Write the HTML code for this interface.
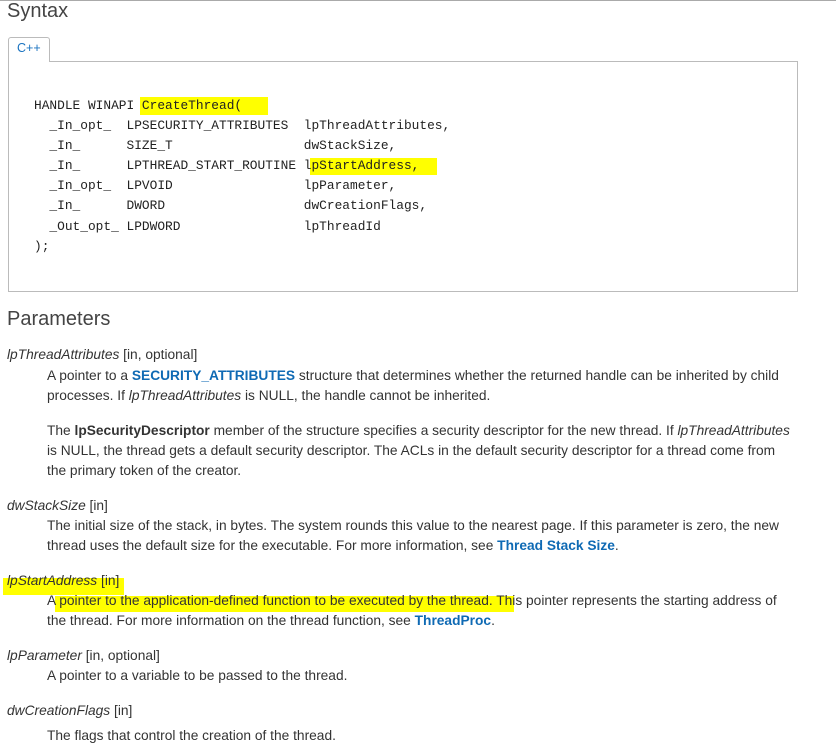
<!DOCTYPE html>
<html><head><meta charset="utf-8"><style>
body{margin:0;width:836px;height:729px;overflow:hidden;background:#fff;position:relative;font-family:"Liberation Sans",sans-serif;color:#333;}
.a{position:absolute;white-space:nowrap;}
.hl{position:absolute;background:#ffff00;}
.t{font-size:13.75px;line-height:20px;}
.m{font-family:"Liberation Mono",monospace;font-size:12.85px;line-height:20.1px;color:#222;white-space:pre;}
a{color:#0f6ab4;text-decoration:none;font-weight:bold;}
</style></head><body>
<div class="a" style="left:0;top:0;width:836px;height:1px;background:#aaa"></div>
<div class="a" style="left:7px;top:0px;font-size:20px;color:#444">Syntax</div>
<div class="a" style="left:8px;top:61px;width:790px;height:231px;border:1px solid #bbb;box-sizing:border-box"></div>
<div class="a" style="left:8px;top:37px;width:42px;height:25px;border:1px solid #bbb;border-bottom:none;border-radius:3px 3px 0 0;background:#fff;box-sizing:border-box"></div>
<div class="a" style="left:17px;top:41px;font-size:12.5px;color:#1a73c0">C++</div>
<div class="hl" style="left:140px;top:97px;width:128px;height:18px"></div>
<div class="hl" style="left:310px;top:158px;width:127px;height:17px"></div>
<div class="hl" style="left:3px;top:578px;width:121px;height:17px"></div>
<div class="hl" style="left:55px;top:596px;width:459px;height:16px"></div>
<pre class="a m" style="left:34px;top:96px;margin:0">HANDLE WINAPI CreateThread(
  _In_opt_  LPSECURITY_ATTRIBUTES  lpThreadAttributes,
  _In_      SIZE_T                 dwStackSize,
  _In_      LPTHREAD_START_ROUTINE lpStartAddress,
  _In_opt_  LPVOID                 lpParameter,
  _In_      DWORD                  dwCreationFlags,
  _Out_opt_ LPDWORD                lpThreadId
);</pre>
<div class="a" style="left:7px;top:308px;font-size:20px;color:#444">Parameters</div>
<div class="a t" style="left:7px;top:345px"><i>lpThreadAttributes</i> [in, optional]</div>
<div class="a t" style="left:47px;top:366px">A pointer to a <a>SECURITY_ATTRIBUTES</a> structure that determines whether the returned handle can be inherited by child</div>
<div class="a t" style="left:47px;top:386px">processes. If <i>lpThreadAttributes</i> is NULL, the handle cannot be inherited.</div>
<div class="a t" style="left:47px;top:421px">The <b>lpSecurityDescriptor</b> member of the structure specifies a security descriptor for the new thread. If <i>lpThreadAttributes</i></div>
<div class="a t" style="left:47px;top:441px">is NULL, the thread gets a default security descriptor. The ACLs in the default security descriptor for a thread come from</div>
<div class="a t" style="left:47px;top:461px">the primary token of the creator.</div>
<div class="a t" style="left:7px;top:496px"><i>dwStackSize</i> [in]</div>
<div class="a t" style="left:47px;top:516px">The initial size of the stack, in bytes. The system rounds this value to the nearest page. If this parameter is zero, the new</div>
<div class="a t" style="left:47px;top:536px">thread uses the default size for the executable. For more information, see <a>Thread Stack Size</a>.</div>
<div class="a t" style="left:7px;top:571px"><i>lpStartAddress</i> [in]</div>
<div class="a t" style="left:47px;top:591px">A pointer to the application-defined function to be executed by the thread. This pointer represents the starting address of</div>
<div class="a t" style="left:47px;top:611px">the thread. For more information on the thread function, see <a>ThreadProc</a>.</div>
<div class="a t" style="left:7px;top:646px"><i>lpParameter</i> [in, optional]</div>
<div class="a t" style="left:47px;top:666px">A pointer to a variable to be passed to the thread.</div>
<div class="a t" style="left:7px;top:701px"><i>dwCreationFlags</i> [in]</div>
<div class="a t" style="left:47px;top:726px">The flags that control the creation of the thread.</div>
</body></html>
